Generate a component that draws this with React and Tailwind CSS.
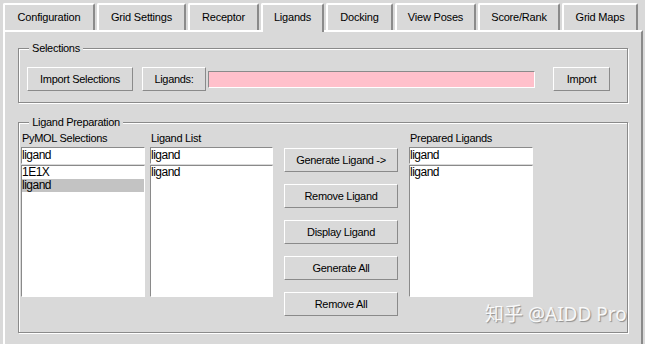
const tabs = [
  { name: "Configuration", w: "w-[92px]" },
  { name: "Grid Settings", w: "w-[89px]" },
  { name: "Receptor", w: "w-[71px]" },
  { name: "Ligands", w: "w-[63px]", active: true },
  { name: "Docking", w: "w-[67px]" },
  { name: "View Poses", w: "w-[81px]" },
  { name: "Score/Rank", w: "w-[82px]" },
  { name: "Grid Maps", w: "w-[76px]" },
];

const raised = "border border-t-white border-l-white border-r-[#8a8a8a] border-b-[#8a8a8a]";
const sunken = "border border-t-[#8a8a8a] border-l-[#8a8a8a] border-r-white border-b-white";

const TkButton = ({ label, className = "" }) => (
  <button
    type="button"
    className={`${raised} h-[24px] bg-[#d9d9d9] text-[11px] tracking-[-0.3px] text-black flex items-center justify-center ${className}`}
  >
    {label}
  </button>
);

const Entry = ({ value }) => (
  <div className={`${sunken} h-[17px] bg-white text-[12px] leading-[15px] tracking-[-0.5px] text-black`}>
    {value}
  </div>
);

const ListBox = ({ items, selected }) => (
  <div className={`${sunken} mt-[1px] h-[132px] bg-white text-[12px] tracking-[-0.5px] text-black`}>
    {items.map((item, i) => (
      <div key={i} className={`h-[13px] leading-[13px] ${i === selected ? "bg-[#c3c3c3]" : ""}`}>
        {item}
      </div>
    ))}
  </div>
);

const Column = ({ title, entry, items, selected, w }) => (
  <div className={`${w} flex flex-col`}>
    <div className="h-[16px] leading-[16px] mb-[1px] pl-[1px] text-[11px] tracking-[-0.3px]">{title}</div>
    <Entry value={entry} />
    <ListBox items={items} selected={selected} />
  </div>
);

// groove frame with its title sitting on the top line
const Group = ({ title, titleW, className = "", children }) => (
  <div className={`relative border border-[#8a8a8a] shadow-[inset_1px_1px_0_#fff,1px_1px_0_#fff] ${className}`}>
    <span className={`absolute left-[10px] top-[-8px] ${titleW} h-[14px] leading-[14px] bg-[#d9d9d9] text-center text-[11px] tracking-[-0.3px]`}>
      {title}
    </span>
    {children}
  </div>
);

const App = () => {
  return (
    <div className="relative w-[645px] h-[344px] overflow-hidden bg-[#d9d9d9] text-black font-['Liberation_Sans',Arial,sans-serif]">
      {/* Tabs */}
      <div className="flex items-end gap-[2px] pt-[3px] pl-[3px]">
        {tabs.map((t) =>
          t.active ? (
            <div
              key={t.name}
              className={`${t.w} relative z-10 h-[29px] mb-[-2px] rounded-t-[2px] border-t-2 border-l-2 border-r-2 border-t-white border-l-white border-r-[#8a8a8a] bg-[#d9d9d9] flex items-center justify-center pb-[2px] text-[11px] tracking-[-0.2px]`}
            >
              {t.name}
            </div>
          ) : (
            <div
              key={t.name}
              className={`${t.w} h-[27px] rounded-t-[2px] border-t-2 border-l-2 border-r-2 border-t-white border-l-white border-r-[#8a8a8a] bg-[#d9d9d9] flex items-center justify-center text-[11px] tracking-[-0.2px]`}
            >
              {t.name}
            </div>
          )
        )}
      </div>

      {/* Tab page */}
      <div className="ml-[3px] w-[640px] h-[330px] border-t-2 border-l-2 border-r-2 border-t-white border-l-white border-r-[#8a8a8a] px-[13px] pt-[16px]">
        <Group title="Selections" titleW="w-[54px]" className="h-[55px]">
          <div className="flex items-center pt-[18px] pl-[8px]">
            <TkButton label="Import Selections" className="w-[106px]" />
            <TkButton label="Ligands:" className="w-[64px] ml-[9px]" />
            <div className={`${sunken} ml-[2px] w-[327px] h-[17px] bg-[#ffc0cb]`} />
            <TkButton label="Import" className="w-[57px] ml-[18px]" />
          </div>
        </Group>

        <Group title="Ligand Preparation" titleW="w-[94px]" className="mt-[19px] h-[211px]">
          <div className="flex items-start pt-[7px] pl-[2px]">
            <Column title="PyMOL Selections" entry="ligand" items={["1E1X", "ligand"]} selected={1} w="w-[124px]" />
            <Column title="Ligand List" entry="ligand" items={["ligand"]} w="w-[123px] ml-[5px]" />
            <div className="w-[114px] ml-[11px] mt-[18px] flex flex-col gap-[12px]">
              <TkButton label="Generate Ligand ->" />
              <TkButton label="Remove Ligand" />
              <TkButton label="Display Ligand" />
              <TkButton label="Generate All" />
              <TkButton label="Remove All" />
            </div>
            <Column title="Prepared Ligands" entry="ligand" items={["ligand"]} w="w-[124px] ml-[11px]" />
          </div>
        </Group>
      </div>

      {/* Watermark */}
      <div className="absolute left-[485px] top-[305px] text-[19px] leading-[19px] text-white/90 [text-shadow:1px_1px_1px_rgba(0,0,0,0.35)] font-['Noto_Sans','Noto_Sans_CJK_SC',sans-serif] whitespace-nowrap">
        知乎 @AIDD Pro
      </div>
    </div>
  );
};

export default App;
